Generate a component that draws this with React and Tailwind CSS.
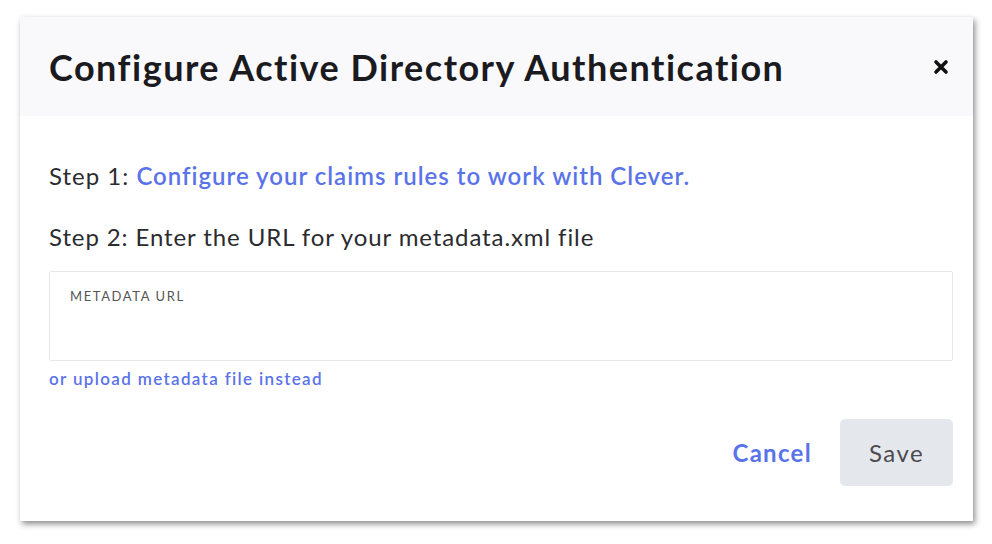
export default function App() {
  return (
    <div className="min-h-screen w-full bg-white" style={{ fontFamily: "Lato, 'Open Sans', sans-serif" }}>
      <div className="pt-[17px] pl-[20px]">
        <div className="w-[953px] h-[504px] bg-white shadow-[2px_3px_6px_rgba(0,0,0,0.45)] flex flex-col">
          {/* Header */}
          <div className="h-[99px] bg-[#f9f9fc] flex items-center justify-between pl-[29px] pr-[20px]">
            <h1 className="text-[36px] font-bold text-[#1a1a1f] tracking-[1.5px]">
              Configure Active Directory Authentication
            </h1>
            <button className="text-[#111] p-1">
              <svg width="16" height="16" viewBox="0 0 16 16">
                <path d="M3 3 L13 13 M13 3 L3 13" stroke="currentColor" strokeWidth="3.6" strokeLinecap="round" />
              </svg>
            </button>
          </div>

          {/* Body */}
          <div className="flex flex-col pl-[29px] pr-[20px]">
            <p className="mt-[46px] text-[24px] text-[#2b2b30] leading-[28px] tracking-[1px]">
              Step 1:{" "}
              <a className="text-[#5b73e8] font-semibold">Configure your claims rules to work with Clever.</a>
            </p>
            <p className="mt-[33px] text-[24px] text-[#2b2b30] leading-[28px] tracking-[0.9px]">
              Step 2: Enter the URL for your metadata.xml file
            </p>
            <div className="mt-[20px] h-[90px] border border-[#e6e7eb] rounded-[2px] px-[20px] pt-[16px]">
              <label className="block text-[13px] text-[#555] uppercase leading-[16px] tracking-[1.6px]">
                Metadata URL
              </label>
              <input className="w-full outline-none text-[16px] mt-2" />
            </div>
            <a className="mt-[8px] text-[17px] font-semibold text-[#5b73e8] leading-[20px] tracking-[1.35px]">
              or upload metadata file instead
            </a>
            <div className="mt-[30px] flex items-center justify-end gap-[28px]">
              <button className="text-[24px] font-bold text-[#5b73e8] tracking-[1.3px]">Cancel</button>
              <button className="w-[113px] h-[67px] rounded-[5px] bg-[#e4e7ec] text-[24px] text-[#4a4a50] tracking-[1.5px]">
                Save
              </button>
            </div>
          </div>
        </div>
      </div>
    </div>
  );
}
